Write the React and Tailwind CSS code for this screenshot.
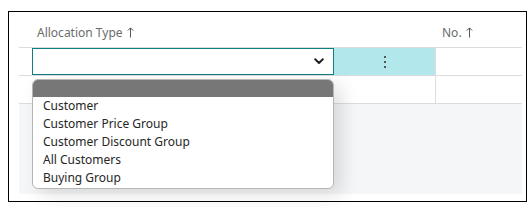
import React from 'react';

const options = [
  'Customer',
  'Customer Price Group',
  'Customer Discount Group',
  'All Customers',
  'Buying Group',
];

function Chevron() {
  return (
    <svg width="10" height="7" viewBox="0 0 10 7" className="block">
      <path d="M1.2 1.3 L5 5 L8.8 1.3" fill="none" stroke="#222" strokeWidth="2" strokeLinecap="round" strokeLinejoin="round" />
    </svg>
  );
}

function SortUp() {
  return (
    <svg width="7" height="11" viewBox="0 0 7 11" className="inline-block ml-[4px] align-[-1px]">
      <path d="M3.5 10.5 V1 M0.8 3.6 L3.5 0.9 L6.2 3.6" fill="none" stroke="#555" strokeWidth="1" />
    </svg>
  );
}

export default function App() {
  return (
    <div className="w-[532px] h-[208px] bg-white pl-[8px] pt-[11px]" style={{ fontFamily: '"Segoe UI", "Noto Sans", sans-serif' }}>
      <div className="relative w-[519px] h-[191px] border border-black pl-[10px] pr-[4px] pb-[7px] flex flex-col">
        {/* header */}
        <div className="flex h-[36px] border-b border-[#dcdcdc] text-[12px] text-[#6b6b6b]">
          <div className="w-[13px]" />
          <div className="w-[302px] pl-[5px] pt-[12px]">Allocation Type<SortUp /></div>
          <div className="w-[101px]" />
          <div className="flex-1 pl-[7px] pt-[12px]">No.<SortUp /></div>
        </div>

        {/* row 1 */}
        <div className="flex h-[28px] border-b border-[#dcdcdc]">
          <div className="w-[13px]" />
          <div className="w-[302px] h-[27px] border border-[#0b7f83] bg-white flex items-center justify-end pr-[9px]">
            <Chevron />
          </div>
          <div className="w-[101px] bg-[#b2e8ec] flex flex-col items-center justify-center gap-[3px]">
            <span className="w-[2px] h-[2px] bg-[#555]" />
            <span className="w-[2px] h-[2px] bg-[#555]" />
            <span className="w-[2px] h-[2px] bg-[#555]" />
          </div>
          <div className="flex-1 border-l border-[#dcdcdc]" />
        </div>

        {/* row 2 */}
        <div className="flex h-[28px] border-b border-[#dcdcdc]">
          <div className="w-[13px]" />
          <div className="w-[302px]" />
          <div className="w-[101px]" />
          <div className="flex-1 border-l border-[#dcdcdc]" />
        </div>

        <div className="flex-1 bg-[#f5f6f8]" />

        {/* open dropdown list */}
        <div className="absolute left-[23px] top-[67px] w-[302px] rounded-[6px] bg-white overflow-hidden border border-[#b5b5b5] shadow-[8px_6px_18px_rgba(0,0,0,0.12)]">
          <div className="h-[17px] bg-[#777777]" />
          <div className="flex flex-col text-[12px] text-[#262626] pb-[1px]">
            {options.map((o) => (
              <div key={o} className="h-[18px] leading-[18px] pl-[10px]">{o}</div>
            ))}
          </div>
        </div>
      </div>
    </div>
  );
}
